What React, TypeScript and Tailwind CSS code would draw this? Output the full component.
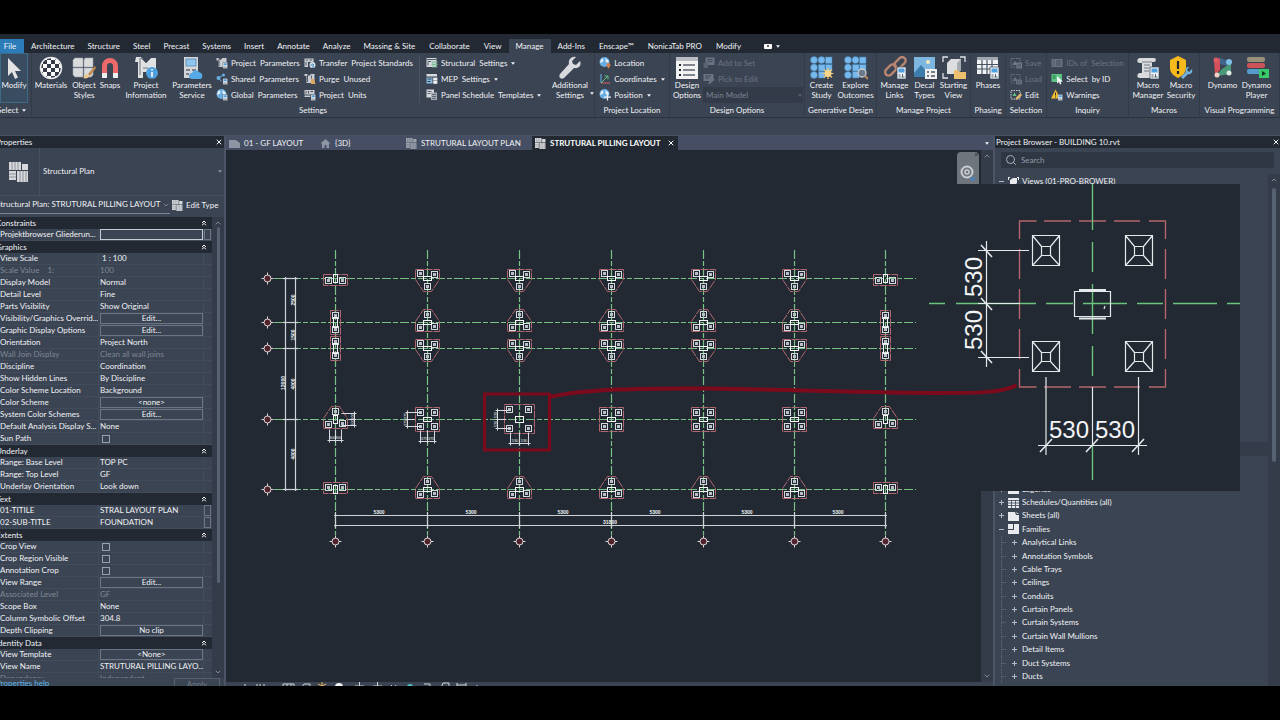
import type { ReactNode } from 'react'
import clsx from 'clsx'
import { ChevronDown, ChevronUp, ChevronsUp, Search, X } from 'lucide-react'

const coreTabs = ['Architecture', 'Structure', 'Steel', 'Precast', 'Systems', 'Insert', 'Annotate', 'Analyze']
const toolTabs = ['Massing & Site', 'Collaborate', 'View', 'Manage', 'Add-Ins', 'Enscape™', 'NonicaTab PRO', 'Modify']

/* ---------- icons ---------- */

const Icon = ({ children, size = 'lg' }: { children: ReactNode; size?: 'lg' | 'sm' }) => (
  <svg viewBox="0 0 24 24" aria-hidden="true" className={clsx('shrink-0', size === 'lg' ? 'size-6' : 'size-3')}>
    {children}
  </svg>
)

// Little blue/white "type" card that sits in the corner of many icons
const Card = () => (
  <g>
    <rect x="14" y="11" width="9" height="12" fill="#f1f4f7" stroke="#3b4453" strokeWidth="0.7" />
    <rect x="15.5" y="12.5" width="6" height="4" fill="#4f9fdc" />
    <path d="M15.5 19h2M19.5 18v3M15.5 21h2M18.5 21h3" stroke="#55606e" />
  </g>
)

const CursorIcon = () => (
  <Icon>
    <path d="M6 2v18l4-4 3 7 3-1.500-3-6.500h6z" fill="#e3e3e3" />
  </Icon>
)

const MaterialsIcon = () => (
  <Icon>
    <defs>
      <pattern id="checker" width="8" height="8" patternUnits="userSpaceOnUse">
        <rect width="8" height="8" fill="#fafafa" />
        <path d="M0 0h4v4H0zM4 4h4v4H4z" fill="#333a45" />
      </pattern>
    </defs>
    <circle cx="12" cy="12" r="10.500" fill="url(#checker)" stroke="#e8e8e8" strokeWidth="1.500" />
  </Icon>
)

const ObjectStylesIcon = () => (
  <Icon>
    <g fill="#d9dbdd" stroke="#9ea4ab" strokeWidth="0.6">
      <path d="M3 2h8v9H1V4z" />
      <path d="M13 2h8v9h-9V4z" />
      <path d="M1 12h10v9H3l-2-2z" />
      <path d="M12 12h9v7l-2 2h-7z" />
    </g>
    <path d="M23 10l-7 8 2 2 6-8z" fill="#c08a4a" />
    <path d="M15 18c-2 0-2 3-4 4 3 1 6 0 6-2z" fill="#f0c987" />
  </Icon>
)

const SnapsIcon = () => (
  <Icon>
    <path d="M4 17V10a8 8 0 0 1 16 0v7h-5v-7a3 3 0 0 0-6 0v7z" fill="#ee6a6a" />
    <path d="M4 17h5v5H4zM15 17h5v5h-5z" fill="#eceff2" />
  </Icon>
)

const ProjectInfoIcon = () => (
  <Icon>
    <path d="M2 1h5l5 6 5-5h5v14H9v6H4V6H1z" fill="#dfe1e3" />
    <path d="M6 2v17M7 2l5 5 5-5M9 12h5" stroke="#6d747e" fill="none" />
    <circle cx="18" cy="17" r="6" fill="#4d9fe0" />
    <path d="M18 16v5M18 13v1.500" stroke="#fff" strokeWidth="1.600" />
  </Icon>
)

const ParamServiceIcon = () => (
  <Icon>
    <rect x="4" y="1" width="14" height="21" fill="#d4d7da" />
    <rect x="6" y="3" width="10" height="7" fill="#8fc6ee" stroke="#477da6" strokeWidth="0.7" />
    <path d="M6 14h4M12 14h4M6 18h3" stroke="#5b6470" strokeWidth="1.500" />
    <path d="M12 23a3 3 0 0 1 0-6 4 4 0 0 1 7-1 4 4 0 0 1 2 7z" fill="#57a8e6" />
  </Icon>
)

const WrenchIcon = () => (
  <Icon>
    <path d="M22 5l-4 4-3-1-1-3 4-4c-4-1-8 2-7 7L2 18c-2 3 1 6 4 4l10-10c5 1 8-3 6-7z" fill="#d8dadd" />
  </Icon>
)

const DesignOptionsIcon = () => (
  <Icon>
    <rect x="1" y="1" width="22" height="22" fill="#f2f2f2" />
    <rect x="1" y="1" width="22" height="4" fill="#b9bdc2" />
    <path d="M8 9h12M8 14h12M8 19h12" stroke="#59616d" strokeWidth="1.500" />
    <path d="M4 9h2M4 14h2M4 19h2" stroke="#20252c" strokeWidth="2" />
  </Icon>
)

const StudyTiles = () => (
  <g fill="#77b9ec" stroke="#3f7fb4" strokeWidth="0.5">
    <circle cx="4" cy="4" r="3.500" />
    <circle cx="11.500" cy="4" r="3.500" />
    <rect x="15.500" y="1" width="6.500" height="6.500" />
    <circle cx="4" cy="11.500" r="3.500" />
    <rect x="8.500" y="8.500" width="6.500" height="6.500" />
    <rect x="15.500" y="8.500" width="6.500" height="6.500" />
    <circle cx="4" cy="19" r="3.500" />
    <rect x="8.500" y="15.500" width="6.500" height="6.500" />
  </g>
)

const CreateStudyIcon = () => (
  <Icon>
    <StudyTiles />
    <path d="M18 12v11M12.500 17.500h11M14 13.500l8 8M22 13.500l-8 8" stroke="#f2c66d" strokeWidth="1.200" />
    <circle cx="18" cy="17.500" r="3.500" fill="#f7d58a" />
  </Icon>
)

const ExploreIcon = () => (
  <Icon>
    <StudyTiles />
    <circle cx="18" cy="17" r="4" fill="#6c7a8b" stroke="#c9cdd2" strokeWidth="1.300" />
    <path d="M21 20l3 3" stroke="#b98b5a" strokeWidth="2" />
  </Icon>
)

const LinksIcon = () => (
  <Icon>
    <g fill="none" stroke="#b88672" strokeWidth="2.400">
      <rect x="10" y="3" width="13" height="7" rx="3.500" transform="rotate(-45 17 6)" />
      <rect x="1" y="11" width="13" height="7" rx="3.500" transform="rotate(-45 7 14)" />
    </g>
    <Card />
  </Icon>
)

const DecalIcon = () => (
  <Icon>
    <rect x="1" y="1" width="21" height="20" fill="#7db6df" />
    <path d="M1 17l7-8 7 8 3-3 4 4v3H1z" fill="#3d7dac" />
    <circle cx="15" cy="6" r="2" fill="#f5e9c0" />
    <rect x="12" y="13" width="12" height="10" fill="#f1f1f1" />
    <path d="M14 16h2M18 16h4M14 20h2M18 20h4" stroke="#4e5662" strokeWidth="1.300" />
  </Icon>
)

const StartingViewIcon = () => (
  <Icon>
    <path d="M1 6V1h5M18 1h5v5M1 17v5h5" fill="none" stroke="#e0e3e6" strokeWidth="1.300" />
    <path d="M5 7l4-4h10v11l-4 4H5z" fill="#dcdee0" />
    <path d="M15 7l4-4v11l-4 4z" fill="#a6abb1" />
    <path d="M12 14h4l1 2h7v7H12z" fill="#ecc06c" />
  </Icon>
)

const PhasesIcon = () => (
  <Icon>
    <rect x="1" y="1" width="21" height="17" fill="#f0f2f4" />
    <rect x="1" y="1" width="21" height="3" fill="#a0a6ae" />
    <path d="M1 8.500h21M1 13h21M6 4v14M11 4v14M16 4v14" stroke="#4a5361" strokeWidth="1.200" />
    <Card />
  </Icon>
)

const MacroManagerIcon = () => (
  <Icon>
    <path d="M4 2h14c3 0 2 4 0 4h-2v16H4c-4 0-3-5 0-5h2V7H4C0 7 1 2 4 2z" fill="#d9dbdd" />
    <path d="M8 9h6M8 12h5M8 15h5M6 6h10" stroke="#727a85" />
    <Card />
  </Icon>
)

const MacroSecurityIcon = () => (
  <Icon>
    <path d="M9 0l8 4v8c0 5-4 8-8 10-4-2-8-5-8-10V4z" fill="#f5b91c" />
    <path d="M9 5v8M9 15v3" stroke="#22262c" strokeWidth="2.200" />
    <path d="M23 13l-3 3-2-2 2-3c-3 0-4 2-3 5l-5 5 2 2 5-5c3 1 5-2 4-5z" fill="#73b3e2" />
  </Icon>
)

const DynamoIcon = () => (
  <Icon>
    <path d="M3 4l6-2v12l-5 5z" fill="#d3505a" />
    <path d="M9 2l11 4v5L9 8z" fill="#42658d" />
    <path d="M5 20l6-7 9-6v11z" fill="#4a9a78" />
    <circle cx="5" cy="4" r="2.500" fill="#dc5c62" />
    <circle cx="18" cy="6" r="3" fill="#7ec0e8" />
    <circle cx="6" cy="19" r="2.500" fill="#f2d0c4" />
    <circle cx="18" cy="17" r="2.500" fill="#dfe8e2" />
  </Icon>
)

const DynamoPlayerIcon = () => (
  <Icon>
    <rect x="2" y="1" width="18" height="5" rx="2" fill="#9a9078" />
    <rect x="2" y="7" width="18" height="5" rx="2" fill="#cc5358" />
    <rect x="2" y="13" width="14" height="5" rx="2" fill="#559ccc" />
    <rect x="14" y="13" width="10" height="9" fill="#38c96a" />
    <path d="M17 15v5l4-2.500z" fill="#12351f" />
  </Icon>
)

type SmallKind =
  | 'project' | 'shared' | 'global' | 'transfer' | 'purge' | 'units' | 'structural' | 'mep' | 'panel'
  | 'location' | 'coordinates' | 'position' | 'addset' | 'pick' | 'save' | 'load' | 'edit' | 'ids' | 'selectid' | 'warning'

const globe = (
  <g>
    <circle cx="11" cy="10" r="10" fill="#69aee2" />
    <path d="M5 3c4 0 5 4 3 6s-4 3-6 2M13 2c3 3 6 4 7 8-3 3-6 1-7-2z" fill="#e5f0f7" />
  </g>
)

const smallShapes: Record<SmallKind, ReactNode> = {
  project: <g><path d="M1 2h4l4 4 4-4h8v18H5V7H1z" fill="#c9cdd2" /><path d="M6 3v16" stroke="#525b69" strokeWidth="2" /><Card /></g>,
  shared: <g><path d="M5 10l9-6M5 10l6 7" stroke="#69aee2" strokeWidth="2" /><circle cx="5" cy="10" r="4" fill="#69aee2" /><circle cx="15" cy="4" r="3" fill="#69aee2" /><Card /></g>,
  global: <g>{globe}<Card /></g>,
  transfer: <g><path d="M1 3h18v7H8v10H1z" fill="#c9cdd2" /><path d="M4 6h4M11 6h5M4 10v7" stroke="#525b69" strokeWidth="2" /><circle cx="17" cy="16" r="6" fill="#d8e6f0" /><path d="M13 16h7l-3-3M20 18l-4 3" stroke="#3f82b6" strokeWidth="2" fill="none" /></g>,
  purge: <g><path d="M1 2h5l4 4 4-4h7v18H5V6H1z" fill="#c9cdd2" /><path d="M7 4v14M15 5v6" stroke="#525b69" strokeWidth="2" /><path d="M14 12h6l3 10h-9z" fill="#d9a85e" /></g>,
  units: <g><path d="M1 2h20v9H1zM1 13h12v3H1z" fill="#c9cdd2" /><path d="M4 4v5M9 4v5M13 5h5" stroke="#454e5c" strokeWidth="2" /><Card /></g>,
  structural: <g><rect x="1" y="2" width="20" height="18" fill="#d5d8dc" /><path d="M1 5h20M4 17V9h6" stroke="#525b69" strokeWidth="2" fill="none" /><path d="M11 10h12M11 15h12M14 10v12M20 10v12" stroke="#7abf95" strokeWidth="2" /></g>,
  mep: <g><rect x="1" y="2" width="21" height="5" fill="#d5d8dc" /><rect x="1" y="9" width="12" height="12" fill="#8abce0" /><path d="M3 12h8M3 17h6" stroke="#33424f" strokeWidth="2" /><path d="M14 9h9v13h-9zM14 15h9" fill="#eef1f3" stroke="#59626f" /></g>,
  panel: <g><path d="M1 1h15v16H1z" fill="#d5d8dc" /><path d="M3 5h8M3 9h6" stroke="#59626f" strokeWidth="2" /><path d="M10 7h12v15H10z" fill="#aab0b8" /><path d="M12 11h8M12 15h8M12 19h8" stroke="#454e5c" strokeWidth="1.500" /></g>,
  location: <g>{globe}<circle cx="19" cy="16" r="4" fill="#d27c4b" /><path d="M16 18h6l-3 6z" fill="#d27c4b" /></g>,
  coordinates: <g fill="none" strokeWidth="2"><path d="M4 2v18" stroke="#69aee2" /><path d="M4 20h18" stroke="#d9636b" /><path d="M4 20L18 6M11 6h7v7" stroke="#65bf83" /></g>,
  position: <g>{globe}<path d="M17 9v14M10 16h14" stroke="#f0f2f4" strokeWidth="2.500" /></g>,
  addset: <g fill="#6a7382"><rect x="5" y="1" width="18" height="15" /><path d="M1 12h9v10H1z" fill="#59626f" /><path d="M9 5h10M9 9h10" stroke="#414a58" strokeWidth="2" /></g>,
  pick: <g fill="#6a7382"><rect x="1" y="2" width="20" height="14" /><path d="M4 6h12M4 10h8" stroke="#414a58" strokeWidth="2" /><path d="M20 10l-8 8-2 5 5-2 8-8z" /></g>,
  save: <g fill="none" stroke="#727b88" strokeWidth="2"><rect x="2" y="3" width="18" height="17" strokeDasharray="3 2" /><path d="M6 15l4-6 4 6z" fill="#727b88" /><rect x="14" y="12" width="9" height="10" fill="#596270" /></g>,
  load: <g fill="none" stroke="#667080" strokeWidth="2"><rect x="2" y="3" width="18" height="17" strokeDasharray="3 2" /><path d="M6 15l4-6 4 6z" fill="#667080" /><path d="M13 14h10v8H13z" fill="#596270" /></g>,
  edit: <g><rect x="2" y="3" width="18" height="17" strokeDasharray="3 2" fill="none" stroke="#cfd4da" strokeWidth="2" /><path d="M5 14l4-7 4 7z" fill="#62c885" /><path d="M21 8l-9 9-1 5 5-2 8-8z" fill="#e2b36f" /></g>,
  ids: <g><rect x="1" y="4" width="22" height="16" fill="#6a7382" /><path d="M4 8h3M10 8h10M4 12h3M10 12h10M4 16h3M10 16h10" stroke="#454e5c" strokeWidth="2" /></g>,
  selectid: <g><rect x="1" y="2" width="21" height="16" fill="#5cc483" /><path d="M4 6h5M4 10h5" stroke="#236b40" strokeWidth="2" /><path d="M12 6v15l4-3 2 5 3-1-2-5h5z" fill="#f1f3f5" /></g>,
  warning: <g><path d="M9 1l10 18H0z" fill="#f2c230" /><path d="M9 7v6M9 15v2" stroke="#2b2f35" strokeWidth="2" /><Card /></g>,
}

const PlanIcon = ({ className }: { className?: string }) => (
  <svg viewBox="0 0 20 20" aria-hidden="true" className={className}>
    <path d="M0 0h12v8H0zM0 9h7v9H0zM13 2h6v6h-6zM8 9h11v11H8z" fill="#d6d8da" />
    <path d="M3 0v8M6 0v8M9 0v8M0 12h7M0 15h7M11 9v11M14 9v11M17 9v11" stroke="#7d848e" strokeWidth="0.8" />
  </svg>
)

/* ---------- ribbon ---------- */

const Caret = () => (
  <svg viewBox="0 0 6 4" aria-hidden="true" className="ml-1 h-[3px] w-[4px] shrink-0 fill-current">
    <path d="M0 0h6L3 4z" />
  </svg>
)

interface BigButtonProps {
  icon: ReactNode
  label: string
  width: string
  dropdown?: boolean
}

const BigButton = ({ icon, label, width, dropdown }: BigButtonProps) => (
  <button type="button" className={clsx('relative flex h-12 shrink-0 flex-col items-center pt-px hover:bg-[#4a5466]', width)}>
    {icon}
    <span className="whitespace-pre text-center leading-[10px]">{label}</span>
    {dropdown && <span className="absolute right-0 bottom-2"><Caret /></span>}
  </button>
)

interface SmallButtonProps {
  kind: SmallKind
  label: string
  dropdown?: boolean
  disabled?: boolean
}

const SmallButton = ({ kind, label, dropdown, disabled }: SmallButtonProps) => (
  <button
    type="button"
    disabled={disabled}
    className="flex h-4 items-center gap-[3px] whitespace-pre text-left hover:bg-[#4a5466] disabled:text-[#6b7482]"
  >
    <Icon size="sm">{smallShapes[kind]}</Icon>
    <span className="flex items-center">
      {label}
      {dropdown && <Caret />}
    </span>
  </button>
)

const Group = ({ title, width, children }: { title: string; width: string; children: ReactNode }) => (
  <section className={clsx('flex flex-col border-r border-[#333b48] pt-0.5', width)}>
    <div className="flex h-12 justify-center">{children}</div>
    <h2 className="h-[14px] whitespace-nowrap text-center leading-[14px]">{title}</h2>
  </section>
)

const Ribbon = () => (
  <div className="flex h-[65px] shrink-0 border-b border-[#2b323e] bg-[#3b4453]">
    <section className="flex w-8 shrink-0 flex-col border-r border-[#333b48]">
      <button type="button" className="flex h-[51px] w-7 flex-col items-center border border-[#3f6a86] bg-[#3a4d60] pt-0.5">
        <CursorIcon />
        <span className="leading-[10px]">Modify</span>
      </button>
      <button type="button" className="-ml-[3px] flex h-[14px] items-center whitespace-nowrap">
        Select <Caret />
      </button>
    </section>

    <Group title="Settings" width="w-[563px] shrink-0">
      <BigButton icon={<MaterialsIcon />} label="Materials" width="w-[38px]" />
      <BigButton icon={<ObjectStylesIcon />} label={'Object\nStyles'} width="w-[28px]" />
      <BigButton icon={<SnapsIcon />} label="Snaps" width="w-[24px]" />
      <BigButton icon={<ProjectInfoIcon />} label={'Project\nInformation'} width="w-[48px]" />
      <BigButton icon={<ParamServiceIcon />} label={'Parameters\nService'} width="w-[44px]" />
      <div className="ml-0.5 flex w-[88px] flex-col">
        <SmallButton kind="project" label="Project  Parameters" />
        <SmallButton kind="shared" label="Shared  Parameters" />
        <SmallButton kind="global" label="Global  Parameters" />
      </div>
      <div className="flex w-[116px] flex-col border-r border-[#4a5363]">
        <SmallButton kind="transfer" label="Transfer  Project Standards" />
        <SmallButton kind="purge" label="Purge  Unused" />
        <SmallButton kind="units" label="Project  Units" />
      </div>
      <div className="ml-1.5 flex w-[120px] flex-col">
        <SmallButton kind="structural" label="Structural  Settings" dropdown />
        <SmallButton kind="mep" label="MEP  Settings" dropdown />
        <SmallButton kind="panel" label="Panel Schedule  Templates" dropdown />
      </div>
      <BigButton icon={<WrenchIcon />} label={'Additional\nSettings'} width="w-[48px]" dropdown />
    </Group>

    <Group title="Project Location" width="w-[75px] shrink-0">
      <div className="flex flex-col">
        <SmallButton kind="location" label="Location" />
        <SmallButton kind="coordinates" label="Coordinates" dropdown />
        <SmallButton kind="position" label="Position" dropdown />
      </div>
    </Group>

    <Group title="Design Options" width="w-[135px] shrink-0">
      <BigButton icon={<DesignOptionsIcon />} label={'Design\nOptions'} width="w-[32px]" />
      <div className="flex w-[100px] flex-col">
        <SmallButton kind="addset" label="Add to Set" disabled />
        <SmallButton kind="pick" label="Pick to Edit" disabled />
        <div className="relative">
          <select disabled aria-label="Active design option" className="h-4 w-full appearance-none bg-[#333b48] pl-[3px] text-[#7b8492]">
            <option>Main Model</option>
          </select>
          <span className="absolute right-px bottom-1.5 text-[#59626f]"><Caret /></span>
        </div>
      </div>
    </Group>

    <Group title="Generative Design" width="w-[72px] shrink-0">
      <BigButton icon={<CreateStudyIcon />} label={'Create\nStudy'} width="w-[30px]" />
      <BigButton icon={<ExploreIcon />} label={'Explore\nOutcomes'} width="w-[38px]" />
    </Group>

    <Group title="Manage Project" width="w-[94px] shrink-0">
      <BigButton icon={<LinksIcon />} label={'Manage\nLinks'} width="w-[32px]" />
      <BigButton icon={<DecalIcon />} label={'Decal\nTypes'} width="w-[28px]" />
      <BigButton icon={<StartingViewIcon />} label={'Starting\nView'} width="w-[30px]" />
    </Group>

    <Group title="Phasing" width="w-[35px] shrink-0">
      <BigButton icon={<PhasesIcon />} label="Phases" width="w-[30px]" />
    </Group>

    <Group title="Selection" width="w-[41px] shrink-0">
      <div className="flex flex-col">
        <SmallButton kind="save" label="Save" disabled />
        <SmallButton kind="load" label="Load" disabled />
        <SmallButton kind="edit" label="Edit" />
      </div>
    </Group>

    <Group title="Inquiry" width="w-[82px] shrink-0">
      <div className="flex flex-col">
        <SmallButton kind="ids" label="IDs of  Selection" disabled />
        <SmallButton kind="selectid" label="Select  by ID" />
        <SmallButton kind="warning" label="Warnings" />
      </div>
    </Group>

    <Group title="Macros" width="w-[71px] shrink-0">
      <BigButton icon={<MacroManagerIcon />} label={'Macro\nManager'} width="w-[34px]" />
      <BigButton icon={<MacroSecurityIcon />} label={'Macro\nSecurity'} width="w-[32px]" />
    </Group>

    <Group title="Visual Programming" width="flex-1">
      <BigButton icon={<DynamoIcon />} label="Dynamo" width="w-[34px]" />
      <BigButton icon={<DynamoPlayerIcon />} label={'Dynamo\nPlayer'} width="w-[34px]" />
    </Group>
  </div>
)

/* ---------- properties ---------- */

type PropKind = 'section' | 'text' | 'button' | 'check' | 'disabled' | 'pick' | 'boxed'

interface Prop {
  label: string
  value?: string
  kind: PropKind
}

const props: Prop[] = [
  { label: 'Constraints', kind: 'section' },
  { label: 'Projektbrowser Gliederun...', value: '', kind: 'boxed' },
  { label: 'Graphics', kind: 'section' },
  { label: 'View Scale', value: ' 1 : 100', kind: 'text' },
  { label: 'Scale Value    1:', value: '100', kind: 'disabled' },
  { label: 'Display Model', value: 'Normal', kind: 'text' },
  { label: 'Detail Level', value: 'Fine', kind: 'text' },
  { label: 'Parts Visibility', value: 'Show Original', kind: 'text' },
  { label: 'Visibility/Graphics Overrid...', value: 'Edit...', kind: 'button' },
  { label: 'Graphic Display Options', value: 'Edit...', kind: 'button' },
  { label: 'Orientation', value: 'Project North', kind: 'text' },
  { label: 'Wall Join Display', value: 'Clean all wall joins', kind: 'disabled' },
  { label: 'Discipline', value: 'Coordination', kind: 'text' },
  { label: 'Show Hidden Lines', value: 'By Discipline', kind: 'text' },
  { label: 'Color Scheme Location', value: 'Background', kind: 'text' },
  { label: 'Color Scheme', value: '<none>', kind: 'button' },
  { label: 'System Color Schemes', value: 'Edit...', kind: 'button' },
  { label: 'Default Analysis Display S...', value: 'None', kind: 'text' },
  { label: 'Sun Path', kind: 'check' },
  { label: 'Underlay', kind: 'section' },
  { label: 'Range: Base Level', value: 'TOP PC', kind: 'text' },
  { label: 'Range: Top Level', value: 'GF', kind: 'text' },
  { label: 'Underlay Orientation', value: 'Look down', kind: 'text' },
  { label: 'Text', kind: 'section' },
  { label: '01-TITILE', value: 'STRAL LAYOUT PLAN', kind: 'pick' },
  { label: '02-SUB-TITLE', value: 'FOUNDATION', kind: 'pick' },
  { label: 'Extents', kind: 'section' },
  { label: 'Crop View', kind: 'check' },
  { label: 'Crop Region Visible', kind: 'check' },
  { label: 'Annotation Crop', kind: 'check' },
  { label: 'View Range', value: 'Edit...', kind: 'button' },
  { label: 'Associated Level', value: 'GF', kind: 'disabled' },
  { label: 'Scope Box', value: 'None', kind: 'text' },
  { label: 'Column Symbolic Offset', value: '304.8', kind: 'text' },
  { label: 'Depth Clipping', value: 'No clip', kind: 'button' },
  { label: 'Identity Data', kind: 'section' },
  { label: 'View Template', value: '<None>', kind: 'button' },
  { label: 'View Name', value: 'STRUTURAL PILLING LAYO...', kind: 'text' },
  { label: 'Dependency', value: 'Independent', kind: 'disabled' },
]

const PropRow = ({ prop, id }: { prop: Prop; id: string }) => {
  if (prop.kind === 'section') {
    return (
      <div className="flex h-3 items-center justify-between bg-[#222933] pr-1">
        <h3 className="-ml-1">{prop.label}</h3>
        <ChevronsUp className="size-2 text-white" strokeWidth={3} />
      </div>
    )
  }

  const hasPicker = prop.kind === 'pick' || prop.kind === 'boxed'

  return (
    <div className="grid h-3 grid-cols-[98px_1fr_8px] border-b border-[#424b5a]">
      <label htmlFor={id} className={clsx('whitespace-pre leading-[11px]', prop.kind === 'disabled' && 'text-[#7f8896]')}>
        {prop.label}
      </label>
      <div className="flex items-center border-x border-[#424b5a] pl-px">
        {prop.kind === 'button' && (
          <button id={id} type="button" className="h-[11px] w-full border border-[#6b7584] leading-[9px]">
            {prop.value}
          </button>
        )}
        {prop.kind === 'check' && (
          <input id={id} type="checkbox" className="ml-0.5 size-2 appearance-none border border-[#98a1ae] checked:bg-[#98a1ae]" />
        )}
        {prop.kind !== 'button' && prop.kind !== 'check' && (
          <input
            id={id}
            defaultValue={prop.value}
            disabled={prop.kind === 'disabled'}
            className={clsx(
              'h-[11px] w-full min-w-0 bg-transparent leading-[11px] outline-none disabled:text-[#7f8896]',
              prop.kind === 'boxed' && 'border border-[#c6ccd4]',
            )}
          />
        )}
      </div>
      {hasPicker && <button type="button" aria-label={`Browse ${prop.label}`} className="h-[11px] w-[7px] border border-[#6b7584]" />}
    </div>
  )
}

const PropertiesPanel = () => (
  <aside className="flex w-[226px] shrink-0 flex-col overflow-hidden border-r-2 border-[#4b5566] bg-[#3b4453]">
    <header className="flex h-3 shrink-0 items-center justify-between bg-[#222933] pr-px">
      <h2 className="-ml-1">Properties</h2>
      <button type="button" aria-label="Close properties"><X className="size-2" strokeWidth={3} /></button>
    </header>

    <div className="flex h-12 shrink-0 items-center border-b border-[#47505f] pr-0.5">
      <div className="flex h-full w-10 items-center border-r border-[#47505f] pl-[9px]">
        <PlanIcon className="size-5" />
      </div>
      <span className="flex-1 pl-[3px]">Structural Plan</span>
      <span className="text-[#8d96a3]"><Caret /></span>
    </div>

    <div className="flex h-[21px] shrink-0 items-start gap-0.5">
      <button type="button" className="-ml-1 flex h-[18px] w-[174px] items-center justify-between whitespace-nowrap border-b border-[#7c8694]">
        Structural Plan: STRUTURAL PILLING LAYOUT
        <ChevronDown className="size-2 shrink-0 text-[#9aa3b0]" />
      </button>
      <button type="button" className="flex h-[18px] items-center gap-[3px] whitespace-nowrap">
        <PlanIcon className="size-[11px]" />
        Edit Type
      </button>
    </div>

    <div className="flex min-h-0 flex-1 overflow-hidden">
      <div className="w-[212px] shrink-0">
        {props.map((prop, i) => (
          <PropRow key={prop.label} prop={prop} id={`prop-${i}`} />
        ))}
      </div>
      <div className="flex flex-1 flex-col items-center justify-between bg-[#343c49] py-0.5">
        <ChevronUp className="size-2 shrink-0 text-[#a9b1bc]" />
        <div className="h-[356px] w-[3px] rounded-full bg-[#566172]" />
        <div className="flex-1" />
        <ChevronDown className="size-2 shrink-0 text-[#a9b1bc]" />
      </div>
    </div>

    <footer className="flex h-2 shrink-0 items-start justify-between overflow-hidden pr-1">
      <a href="#help" className="-ml-1 leading-[10px] text-[#5cb4e4] underline">Properties help</a>
      <button type="button" className="h-3 w-[46px] border border-[#566070] text-[#717a88]">Apply</button>
    </footer>
  </aside>
)

/* ---------- foundation plan ---------- */

const GRID_X = [335, 427, 519, 611, 703, 794, 885]
const GRID_Y = [278, 322, 348, 419, 489]

const Pile = ({ x, y }: { x: number; y: number }) => (
  <g>
    <rect x={x - 3} y={y - 3} width="6" height="6" fill="none" stroke="#d6dade" />
    <rect x={x - 1.5} y={y - 1.5} width="3" height="3" fill="#b9bfc6" />
  </g>
)

interface CapShape {
  outline: string
  piles: number[][]
  column: number[]
}

const capShapes: Record<string, CapShape> = {
  down: { outline: '-12,-9 12,-9 12,1 4,13 -4,13 -12,1', piles: [[-7, -5], [7, -4], [0, 8]], column: [8, 4] },
  up: { outline: '-12,9 12,9 12,-1 4,-13 -4,-13 -12,-1', piles: [[-7, 5], [7, 4], [0, -8]], column: [8, 4] },
  upEdge: { outline: '-12,9 12,9 12,-1 4,-13 -4,-13 -12,-1', piles: [[-7, 5], [7, 4], [0, -8]], column: [4, 8] },
  square: { outline: '-12,-12 12,-12 12,12 -12,12', piles: [[-7, -7], [7, -7], [-7, 7], [7, 7]], column: [8, 4] },
  large: { outline: '-15,-15 15,-15 15,14 -15,14', piles: [[-10, -10], [9, -10], [-10, 9], [9, 9]], column: [8, 6] },
  wideTop: { outline: '-12,-4 12,-4 12,7 -12,7', piles: [[-7, 2], [7, 2]], column: [4, 8] },
  wideBottom: { outline: '-12,-7 12,-7 12,4 -12,4', piles: [[-7, -2], [7, -2]], column: [4, 8] },
  tall: { outline: '-5,-12 5,-12 5,12 -5,12', piles: [[0, -7], [0, 7]], column: [4, 10] },
}

const capFor = (col: number, row: number) => {
  const edge = col === 0 || col === 6
  if (row === 0) return edge ? 'wideTop' : 'down'
  if (row === 1) return edge ? 'tall' : 'up'
  if (row === 2) return edge ? 'tall' : 'down'
  if (row === 3) return edge ? 'upEdge' : col === 2 ? 'large' : 'square'
  return edge ? 'wideBottom' : 'up'
}

const Bubble = ({ x, y }: { x: number; y: number }) => (
  <g stroke="#e4d5d6">
    <path d={`M${x - 6} ${y}h12M${x} ${y - 6}v12`} />
    <circle cx={x} cy={y} r="3.500" fill="#50242f" />
  </g>
)

const verticalDims = [
  { x: 294, y: 300, text: '2500' },
  { x: 294, y: 335, text: '1500' },
  { x: 294, y: 384, text: '4000' },
  { x: 294, y: 454, text: '4000' },
  { x: 284, y: 383, text: '12000' },
]

// Tiny local dimension strings next to the caps on the fourth grid row
const LocalDims = ({ x, y, side, reach, text }: { x: number; y: number; side: number; reach: number; text: string }) => {
  const dx = x + side * (reach + 13)
  return (
    <g>
      <path
        d={`M${dx} ${y - reach - 2}v${reach * 2 + 4}M${x + side * reach} ${y - reach}H${dx + side * 2}M${x + side * 13} ${y}H${dx + side * 2}M${x + side * reach} ${y + reach}H${dx + side * 2}`}
        stroke="#d7dbe0"
        fill="none"
      />
      <path
        d={`M${x - reach - 2} ${y + reach + 15}h${reach * 2 + 4}M${x - reach} ${y + reach + 4}v13M${x} ${y + reach + 4}v13M${x + reach} ${y + reach + 4}v13`}
        stroke="#d7dbe0"
        fill="none"
      />
      <text x={x - reach / 2} y={y + reach + 13} textAnchor="middle">{text}</text>
      <text x={x + reach / 2} y={y + reach + 13} textAnchor="middle">{text}</text>
      <text transform={`translate(${dx - 1} ${y - reach / 2}) rotate(-90)`} textAnchor="middle">{text}</text>
      <text transform={`translate(${dx - 1} ${y + reach / 2}) rotate(-90)`} textAnchor="middle">{text}</text>
    </g>
  )
}

const FoundationPlan = () => (
  <svg
    viewBox="226 150 754 532"
    preserveAspectRatio="xMinYMin meet"
    role="img"
    aria-label="Structural pilling layout"
    className="size-full font-['Liberation_Sans',sans-serif] text-[4px]"
    fill="#f0f2f4"
  >
    <g stroke="#79c285" strokeWidth="1.200" strokeDasharray="9 2 5 2">
      {GRID_X.map((x) => <path key={x} d={`M${x}.5 250V535`} />)}
      {GRID_Y.map((y) => <path key={y} d={`M274 ${y}.5H916`} />)}
    </g>

    {GRID_Y.map((y) => <Bubble key={y} x={267.5} y={y + 0.5} />)}
    {GRID_X.map((x) => <Bubble key={x} x={x + 0.5} y={541.5} />)}

    <g stroke="#cfd3d8" strokeWidth="1.200">
      <path d="M285.500 277V491M295.500 277V491" />
      <path d="M334 515.500H887M334 525.500H887" />
      {GRID_X.map((x) => <path key={x} d={`M${x}.5 512V528`} />)}
      {GRID_Y.map((y) => <path key={y} d={`M283 ${y}.5H298`} />)}
    </g>
    <g className="text-[5px] font-bold">
      {verticalDims.map((d) => (
        <text key={`${d.x}-${d.y}`} transform={`translate(${d.x + 1} ${d.y}) rotate(-90)`} textAnchor="middle">{d.text}</text>
      ))}
      {GRID_X.slice(0, 6).map((x) => (
        <text key={x} x={x + 44} y="514" textAnchor="middle">5300</text>
      ))}
      <text x="610" y="524" textAnchor="middle">31800</text>
    </g>

    {GRID_Y.map((y, row) =>
      GRID_X.map((x, col) => {
        const cap = capShapes[capFor(col, row)]
        const [w, h] = cap.column
        return (
          <g key={`${col}-${row}`} transform={`translate(${x}.5 ${y}.5)`}>
            <polygon points={cap.outline} fill="none" stroke="#b0676f" strokeDasharray="8 1" />
            {cap.piles.map(([px, py]) => <Pile key={`${px},${py}`} x={px} y={py} />)}
            <rect x={-w / 2} y={-h / 2} width={w} height={h} fill="none" stroke="#f4f6f8" />
          </g>
        )
      }),
    )}

    <LocalDims x={335.5} y={419.5} side={1} reach={6} text="300" />
    <LocalDims x={427.5} y={419.5} side={-1} reach={7} text="375" />
    <LocalDims x={519.5} y={419.5} side={-1} reach={9} text="530" />
  </svg>
)

/* ---------- enlarged detail and red markup ---------- */

const DetailPile = ({ x, y }: { x: number; y: number }) => (
  <path
    transform={`translate(${x} ${y})`}
    d="M0 0h27v30H0zM9 11h9v9H9zM0 0l9 11M27 0l-9 11M0 30l9-10M27 30l-9-10"
    fill="none"
    stroke="#e6e9ec"
    strokeWidth="1.200"
  />
)

const DetailOverlay = () => (
  <svg
    viewBox="0 136 1280 550"
    preserveAspectRatio="xMinYMin meet"
    role="img"
    aria-label="Pile cap detail"
    className="pointer-events-none absolute inset-0 size-full font-['Liberation_Sans',sans-serif] text-[24px]"
  >
    <rect x="929" y="184" width="311" height="307" fill="#222933" />

    <g stroke="#b5656d" strokeWidth="1.400" fill="none">
      <path d="M1019.500 239v-18h17M1044 221h27M1079 221h27M1114 221h26M1149 221h16.500v18" />
      <path d="M1019.500 369v18h17M1044 387h27M1079 387h27M1114 387h26M1149 387h16.500v-18" />
      <path d="M1019.500 249v30M1019.500 289v30M1019.500 329v30M1165.500 249v30M1165.500 289v30M1165.500 329v30" />
    </g>

    <g stroke="#6cc47b" strokeWidth="1.400">
      <path d="M1092.500 184v46M1092.500 242v30M1092.500 284v50M1092.500 346v30M1092.500 445v35" />
      <path d="M929 303.500h16M956 303.500h80M1046 303.500h27M1083 303.500h44M1137 303.500h26M1173 303.500h44M1227 303.500h13" />
    </g>

    <DetailPile x={1032.500} y={235.500} />
    <DetailPile x={1125.500} y={235.500} />
    <DetailPile x={1032.500} y={341.500} />
    <DetailPile x={1125.500} y={341.500} />

    <g fill="none" stroke="#e6e9ec" strokeWidth="1.200">
      <path d="M1074.500 291.500h36v25h-36zM1105 306l-1 3" />
      <path d="M1079 290h27M1079 318.500h27" strokeWidth="2" />
      <path d="M986.500 241v126M978 250.500h51M978 303.500h42M978 357.500h51" />
      <path d="M1038 445.500h109M1046 377v78M1092.500 387v58M1138.500 377v78" />
      <path d="M981 245l11 12M981 298l11 12M981 351l11 12" strokeWidth="1.600" />
      <path d="M1040 452l12-13M1086 452l12-13M1132 452l12-13" strokeWidth="1.600" />
    </g>

    <g fill="#f2f4f6" textAnchor="middle">
      <text x="1069" y="438">530</text>
      <text x="1115" y="438">530</text>
      <text transform="translate(982 277) rotate(-90)">530</text>
      <text transform="translate(982 330) rotate(-90)">530</text>
    </g>

    <g fill="none" stroke="#7c0a1d" strokeWidth="3">
      <rect x="484.500" y="394" width="65" height="56" />
      <path d="M550 397C585 389 640 388 710 388.500C800 390 880 393 940 393C975 393 1000 393 1015 386" strokeWidth="4" strokeLinecap="round" />
    </g>
  </svg>
)

/* ---------- drawing area ---------- */

const docTabs = [
  { name: '01 - GF LAYOUT', width: 'w-[91px]', icon: 'sheet' },
  { name: '{3D}', width: 'w-[86px]', icon: 'house' },
  { name: 'STRUTURAL LAYOUT PLAN', width: 'w-[129px]', icon: 'plan' },
]

const DocIcon = ({ icon }: { icon: string }) => {
  if (icon === 'plan') return <PlanIcon className="size-[11px] opacity-60" />
  return (
    <svg viewBox="0 0 11 11" aria-hidden="true" className="size-[11px] fill-[#8e95a2]">
      {icon === 'sheet' ? <path d="M0 2h7l4 3v5H0z" /> : <path d="M5.500 1l5 4.500H9V10H6.500V7h-2v3H2V5.500H.5z" />}
    </svg>
  )
}

const ViewControls = () => (
  <div className="h-1 shrink-0 overflow-hidden bg-[#3b4453]">
    <svg viewBox="226 682 330 12" aria-hidden="true" className="h-3 w-[330px]" fill="none" stroke="#d0d5db">
      <path d="M245 684v4M256 685h2M259 685h2M263 685h2" />
      <path d="M283 684h11v6h-11zM287 684v4M291 684v4M301 688l3-4h6v6" />
      <path d="M322 682v6M318 684l8 4M326 684l-8 4" stroke="#e8b662" />
      <circle cx="339" cy="687" r="4" fill="#f4f6f8" stroke="none" />
      <path d="M355 686h9M359.500 682v6M373 686h9M377.500 682v6M391 685l3 3M396 685l-2 3" />
      <circle cx="410" cy="687" r="3" fill="#4fc7c0" stroke="none" />
      <path d="M424 684h6v5M441 688l2-5h6v5M457 683v6M466 683v6M457 685h9M477 685v3" />
    </svg>
  </div>
)

const DrawingArea = () => (
  <main className="flex min-w-0 flex-1 flex-col">
    <div className="flex h-[14px] shrink-0 items-center bg-[#454e62]">
      {docTabs.map((tab) => (
        <button key={tab.name} type="button" className={clsx('flex h-full shrink-0 items-center gap-1 whitespace-nowrap pl-[3px]', tab.width)}>
          <DocIcon icon={tab.icon} />
          {tab.name}
        </button>
      ))}
      <div className="flex h-full w-[146px] shrink-0 items-center justify-between whitespace-nowrap bg-[#222933] px-[3px] font-bold text-white">
        <button type="button" className="flex items-center gap-1">
          <PlanIcon className="size-[11px]" />
          STRUTURAL PILLING LAYOUT
        </button>
        <button type="button" aria-label="Close view"><X className="size-2" strokeWidth={3} /></button>
      </div>
      <button type="button" aria-label="Open views" className="ml-auto flex h-full w-3 items-center"><Caret /></button>
    </div>

    <div className="flex min-h-0 flex-1">
      <div className="relative min-w-0 flex-1 bg-[#222933]">
        <FoundationPlan />
        <div className="absolute top-0.5 right-0.5 flex h-10 w-[22px] flex-col items-center rounded-t-sm bg-[#6f757d]">
          <X className="size-[5px] self-end text-[#20252c]" strokeWidth={3} />
          <svg viewBox="0 0 16 16" aria-hidden="true" className="mt-2 size-4" fill="none" stroke="#c9cdd2" strokeWidth="2">
            <circle cx="7" cy="7" r="5.500" />
            <circle cx="7" cy="7" r="2" strokeWidth="1.500" />
            <path d="M10 13h5M11 15h4" stroke="#4f7fae" />
          </svg>
        </div>
      </div>
      <div className="flex w-3 shrink-0 flex-col items-center justify-between bg-[#343c49] py-0.5">
        <ChevronUp className="size-2 text-[#a9b1bc]" />
        <ChevronDown className="size-2 text-[#a9b1bc]" />
      </div>
    </div>
    <ViewControls />
  </main>
)

/* ---------- project browser ---------- */

const families = [
  'Analytical Links', 'Annotation Symbols', 'Cable Trays', 'Ceilings', 'Conduits', 'Curtain Panels',
  'Curtain Systems', 'Curtain Wall Mullions', 'Detail Items', 'Duct Systems', 'Ducts',
]

const TreeIcon = ({ kind }: { kind: string }) => (
  <svg viewBox="0 0 11 10" aria-hidden="true" className="h-[10px] w-[11px] shrink-0" fill="#e8eaed">
    {kind === 'views' && <path d="M0 0h2v1H1v2H0zM9 0h2v3h-1V1H9zM0 7h1v2h1v1H0zM10 7h1v3H9V9h1zM2 3l3-2h4v5L6 9H2z" />}
    {kind === 'table' && (
      <>
        <rect width="11" height="10" />
        <path d="M0 2.500h11M0 5h11M0 7.500h11M3.500 2v8M7.500 2v8" stroke="#3b4453" strokeWidth="0.8" />
      </>
    )}
    {kind === 'sheet' && <path d="M0 1h7l1 3h3v6H0zM8 1l3 2H9z" />}
    {kind === 'family' && <path d="M0 0h5v5H0zM6 0h5v10H0V6h6z" />}
  </svg>
)

const Toggle = ({ label, open }: { label: string; open?: boolean }) => (
  <button type="button" aria-label={`Toggle ${label}`} className="flex w-2 justify-center text-[#b4bbc5]">
    <svg viewBox="0 0 7 7" aria-hidden="true" className="size-[7px]" stroke="currentColor">
      <path d={open ? 'M1 3.500h5' : 'M1 3.500h5M3.500 1v5'} />
    </svg>
  </button>
)

const TreeRow = ({ kind, label, open }: { kind: string; label: string; open?: boolean }) => (
  <li className="flex min-h-0 flex-1 items-center gap-[3px] overflow-hidden whitespace-nowrap pl-0.5">
    <Toggle label={label} open={open} />
    <TreeIcon kind={kind} />
    <span>{label}</span>
  </li>
)

const ProjectBrowser = () => (
  <aside className="flex w-[287px] shrink-0 flex-col border-l-2 border-[#4b5566] bg-[#3b4453]">
    <header className="flex h-3 shrink-0 items-center justify-between bg-[#222933] pl-px">
      <h2>Project Browser - BUILDING 10.rvt</h2>
      <button type="button" aria-label="Close project browser"><X className="size-2" strokeWidth={3} /></button>
    </header>
    <label className="mx-1.5 mt-1 mb-1.5 flex h-4 shrink-0 items-center gap-1 bg-[#2f3743] px-1">
      <Search className="size-3 text-[#a9b1bc]" />
      <input type="search" placeholder="Search" aria-label="Search views" className="flex-1 bg-transparent outline-none placeholder:text-[#939ba7]" />
    </label>
    <div className="flex min-h-0 flex-1">
      <ul className="flex flex-1 flex-col pt-px pb-[3px]">
        <TreeRow kind="views" label="Views (01-PRO-BROWER)" open />
        <li aria-hidden="true" className="flex-[19]" />
        <li aria-hidden="true" className="flex-1 bg-[#343c49]" />
        <li aria-hidden="true" className="flex-[2]" />
        <TreeRow kind="sheet" label="Legends" />
        <TreeRow kind="table" label="Schedules/Quantities (all)" />
        <TreeRow kind="sheet" label="Sheets (all)" />
        <TreeRow kind="family" label="Families" open />
        {families.map((name) => (
          <li key={name} className="ml-1.5 flex min-h-0 flex-1 items-center gap-1 border-l border-dotted border-[#5c6675]">
            <span className="w-1 border-t border-dotted border-[#5c6675]" />
            <Toggle label={name} />
            <span className="whitespace-nowrap">{name}</span>
          </li>
        ))}
      </ul>
      <div className="flex w-3 flex-col items-center bg-[#343c49] py-0.5">
        <ChevronUp className="size-2 text-[#a9b1bc]" />
        <div className="mt-1 h-[274px] w-1 rounded-full bg-[#566172]" />
      </div>
    </div>
  </aside>
)

export default function App() {
  return (
    <div className="flex h-screen flex-col overflow-hidden bg-black py-[34px] font-['Lato','Open_Sans',sans-serif] text-[8px] leading-[11px] text-[#f0f2f5]">
      <nav className="flex h-[19px] shrink-0 items-end bg-[#222933]">
        <button type="button" className="h-[14px] w-6 shrink-0 bg-[#2b7cb8] pr-1">File</button>
        {coreTabs.map((tab) => (
          <button key={tab} type="button" className="h-[14px] whitespace-nowrap pr-1.5 pl-[7px]">{tab}</button>
        ))}
        {toolTabs.map((tab) => (
          <button key={tab} type="button" className={clsx('h-[14px] whitespace-nowrap px-[7px]', tab === 'Manage' && 'bg-[#3b4453]')}>
            {tab}
          </button>
        ))}
        <button type="button" aria-label="Ribbon display" className="ml-4 flex h-[14px] items-center">
          <span className="flex h-[5px] w-2 items-center justify-center rounded-[1px] bg-white">
            <span className="size-0.5 rounded-full bg-[#222933]" />
          </span>
          <Caret />
        </button>
      </nav>
      <Ribbon />
      <div className="h-[18px] shrink-0 border-b border-[#4a5363] bg-[#3b4453]" />
      <div className="relative flex min-h-0 flex-1 overflow-hidden">
        <PropertiesPanel />
        <DrawingArea />
        <ProjectBrowser />
        <DetailOverlay />
      </div>
    </div>
  )
}
